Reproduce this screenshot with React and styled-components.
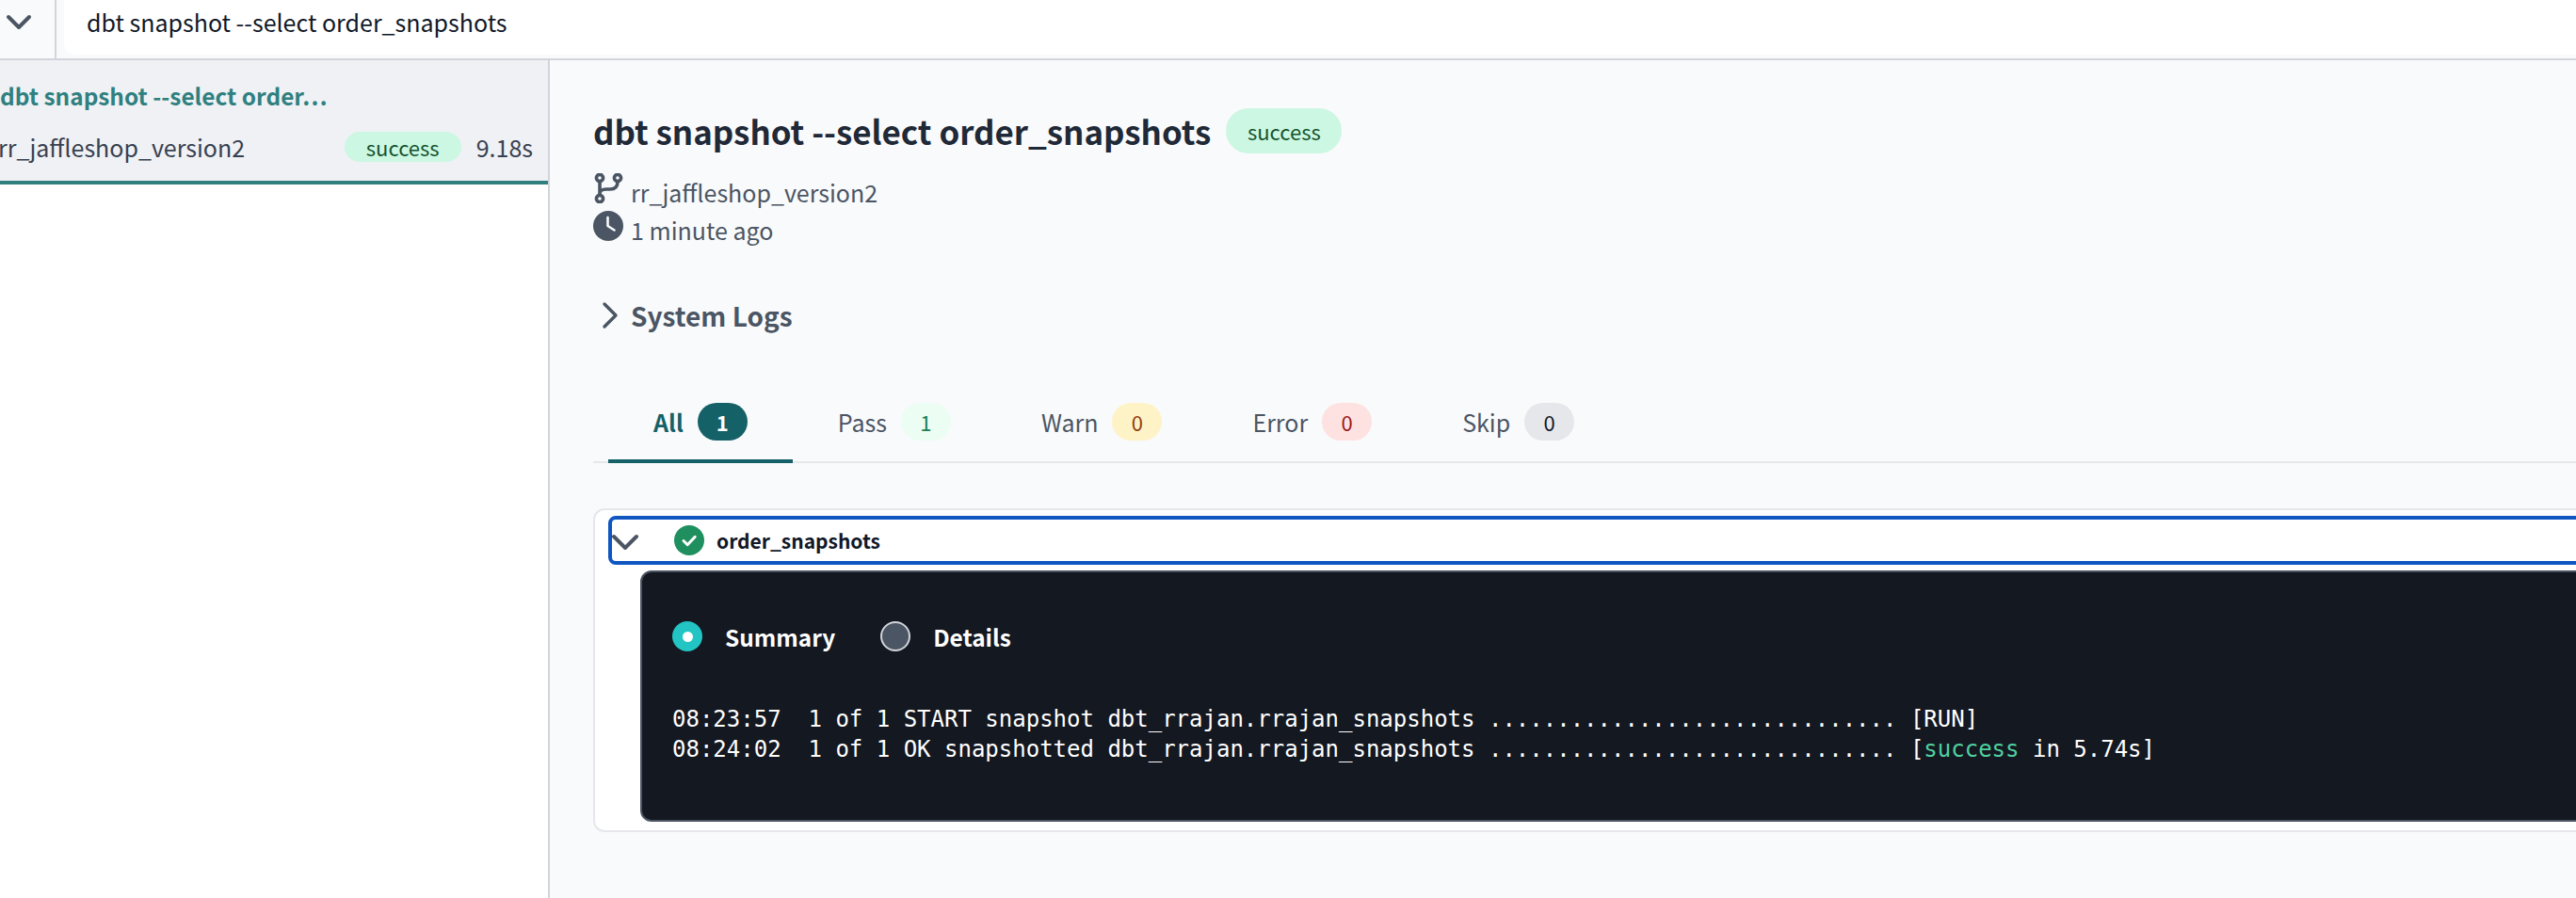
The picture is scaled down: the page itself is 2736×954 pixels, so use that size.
import React from 'react';
import styled, { createGlobalStyle } from 'styled-components';

const sans = `"Noto Sans CJK SC", "Source Sans Pro", "Noto Sans", sans-serif`;

const Global = createGlobalStyle`
    html, body {
        margin: 0;
        padding: 0;
        background: #f9fafb;
        overflow: hidden;
    }
    * {
        box-sizing: border-box;
    }
`;

const Page = styled.div`
    width: 2736px;
    height: 954px;
    display: flex;
    flex-direction: column;
    overflow: hidden;
    font-family: ${sans};
    color: #1f2937;
`;

const TopBar = styled.div`
    flex: none;
    height: 64px;
    display: flex;
    background: #f9fafb;
    border-bottom: 2px solid #d1d5db;
`;

const ToggleCell = styled.div`
    flex: none;
    width: 60px;
    padding: 14px 0 0 6px;
    border-right: 2px solid #d1d5db;
`;

const CommandBox = styled.div`
    flex: 1;
    height: 58px;
    margin-left: 8px;
    padding-left: 24px;
    display: flex;
    align-items: center;
    padding-bottom: 12px;
    background: #fff;
    border-bottom-left-radius: 12px;
    font-size: 25px;
    color: #111827;
`;

const Body = styled.div`
    flex: 1;
    display: flex;
    min-height: 0;
`;

const Sidebar = styled.div`
    flex: none;
    width: 584px;
    background: #fff;
    border-right: 2px solid #d1d5db;
`;

const RunItem = styled.div`
    height: 132px;
    padding: 18px 16px 0 0;
    background: #f0f1f4;
    border-bottom: 4px solid #2f7f7f;
`;

const RunTitle = styled.div`
    font-size: 24.4px;
    font-weight: 700;
    line-height: 40px;
    color: #2f8080;
`;

const RunMeta = styled.div`
    display: flex;
    align-items: center;
    margin-top: 16px;
    font-size: 25px;
    color: #374151;
`;

const RunBranch = styled.span`
    flex: 1;
    margin-left: -2px;
`;

const RunBadge = styled.span`
    width: 124px;
    height: 32px;
    display: flex;
    align-items: center;
    justify-content: center;
    border-radius: 16px;
    background: #ccf7e3;
    color: #14532d;
    font-size: 22px;
`;

const RunTime = styled.span`
    margin-left: 16px;
`;

const Main = styled.div`
    flex: 1;
    min-width: 0;
    padding: 51px 0 0 46px;
    background: #f9fafb;
`;

const Content = styled.div`
    width: 2400px;
`;

const TitleRow = styled.div`
    display: flex;
    align-items: center;
    height: 48px;
`;

const Title = styled.h1`
    margin: 0;
    font-size: 34.9px;
    font-weight: 700;
    color: #1f2937;
`;

const TitleBadge = styled.span`
    width: 123px;
    height: 48px;
    margin-left: 16px;
    display: flex;
    align-items: center;
    justify-content: center;
    border-radius: 24px;
    background: #ccf7e3;
    color: #14532d;
    font-size: 22px;
`;

const MetaList = styled.div`
    margin-top: 20px;
`;

const MetaRow = styled.div`
    display: flex;
    align-items: flex-start;
    gap: 8px;
    height: 40px;
    font-size: 25px;
    line-height: 42px;
    color: #4b5563;
`;

const MetaIcon = styled.svg`
    flex: none;
    width: 32px;
    height: 32px;
    margin-top: 1px;
`;

const LogsToggle = styled.div`
    display: flex;
    align-items: center;
    gap: 8px;
    height: 40px;
    margin-top: 52px;
    font-size: 28px;
    font-weight: 600;
    color: #4b5563;
`;

const Tabs = styled.div`
    display: flex;
    height: 92px;
    margin-top: 45px;
    padding-left: 16px;
    border-bottom: 2px solid #e5e7eb;
`;

const Tab = styled.div`
    height: 92px;
    padding: 28px 48px 0;
    display: flex;
    align-items: flex-start;
    gap: 15px;
    font-size: 25px;
    line-height: 40px;
    font-weight: ${(props) => (props.$active ? 600 : 400)};
    color: ${(props) => (props.$active ? '#156168' : '#4b5563')};
    border-bottom: ${(props) => (props.$active ? '4px solid #156168' : '0')};
`;

const Count = styled.span`
    width: 53px;
    height: 40px;
    display: flex;
    align-items: center;
    justify-content: center;
    border-radius: 20px;
    font-size: 22px;
    font-weight: ${(props) => (props.$active ? 700 : 400)};
    background: ${(props) => props.$bg};
    color: ${(props) => props.$fg};
`;

const Card = styled.div`
    margin-top: 48px;
    height: 344px;
    padding: 6px 0 0 14px;
    background: #fff;
    border: 2px solid #e5e7eb;
    border-radius: 12px;
`;

const NodeRow = styled.div`
    height: 52px;
    display: flex;
    align-items: center;
    border: 4px solid #0f56c0;
    border-radius: 8px;
`;

const NodeChevron = styled.svg`
    flex: none;
    width: 36px;
    height: 24px;
    margin-right: 30px;
`;

const NodeName = styled.span`
    margin-left: 13px;
    font-size: 21px;
    font-weight: 600;
    color: #111827;
`;

const Terminal = styled.div`
    height: 267px;
    margin: 6px 0 0 34px;
    padding: 52px 32px 0;
    background: #141821;
    border: 2px solid #4b5563;
    border-radius: 12px;
    color: #fff;
`;

const RadioRow = styled.div`
    display: flex;
    align-items: center;
    height: 32px;
`;

const Radio = styled.span`
    flex: none;
    width: 32px;
    height: 32px;
    border-radius: 50%;
    display: flex;
    align-items: center;
    justify-content: center;
    background: ${(props) => (props.$on ? '#22c4c4' : '#4b5563')};
    border: ${(props) => (props.$on ? '0' : '2px solid #d1d5db')};
    &::after {
        content: '';
        display: ${(props) => (props.$on ? 'block' : 'none')};
        width: 11px;
        height: 11px;
        border-radius: 50%;
        background: #fff;
    }
`;

const RadioLabel = styled.span`
    margin-left: 24px;
    margin-right: 48px;
    font-size: 24.4px;
    font-weight: 600;
`;

const LogOutput = styled.pre`
    margin: 56px 0 0;
    font-family: "DejaVu Sans Mono", "Liberation Mono", monospace;
    font-size: 24px;
    line-height: 32px;
    color: #fff;
`;

const Ok = styled.span`
    color: #4fd1a0;
`;

const ChevronDown = () => (
    <svg width="28" height="18" viewBox="0 0 28 18" fill="none">
        <path d="M3 3 L14 14 L25 3" stroke="#4b5563" strokeWidth="4" strokeLinecap="round" strokeLinejoin="round" />
    </svg>
);

const ChevronRight = () => (
    <svg width="32" height="32" viewBox="0 0 32 32" fill="none">
        <path d="M12 4 L24 16 L12 28" stroke="#4b5563" strokeWidth="3.4" strokeLinecap="round" strokeLinejoin="round" />
    </svg>
);

const BranchIcon = () => (
    <MetaIcon viewBox="0 0 32 32" fill="none" stroke="#4b5563" strokeWidth="3.6">
        <circle cx="7" cy="5" r="3.6" />
        <circle cx="7" cy="27" r="3.6" />
        <circle cx="26" cy="5" r="3.6" />
        <path d="M7 9v14M26 9c0 6-3 8-8 8h-4c-4 0-7 1-7 5" />
    </MetaIcon>
);

const ClockIcon = () => (
    <MetaIcon viewBox="0 0 32 32">
        <circle cx="16" cy="16" r="16" fill="#4b5563" />
        <path d="M15.5 7v9l7 4.5" fill="none" stroke="#f9fafb" strokeWidth="2.6" strokeLinecap="round" strokeLinejoin="round" />
    </MetaIcon>
);

const CheckIcon = () => (
    <svg width="32" height="32" viewBox="0 0 32 32">
        <circle cx="16" cy="16" r="16" fill="#1f8f60" />
        <path d="M10 16.5l4.2 4.2 8-8.4" fill="none" stroke="#fff" strokeWidth="3" strokeLinecap="round" strokeLinejoin="round" />
    </svg>
);

const tabs = [
    { label: 'All', count: 1, bg: '#156168', fg: '#fff', active: true },
    { label: 'Pass', count: 1, bg: '#ecfdf3', fg: '#1a7f56' },
    { label: 'Warn', count: 0, bg: '#fef3c7', fg: '#92400e' },
    { label: 'Error', count: 0, bg: '#fee2e2', fg: '#991b1b' },
    { label: 'Skip', count: 0, bg: '#e5e7eb', fg: '#111827' },
];

const logs = [
    '08:23:57  1 of 1 START snapshot dbt_rrajan.rrajan_snapshots .............................. [RUN]',
    '08:24:02  1 of 1 OK snapshotted dbt_rrajan.rrajan_snapshots .............................. [',
];

const App = () => (
    <Page>
        <Global />
        <TopBar>
            <ToggleCell>
                <ChevronDown />
            </ToggleCell>
            <CommandBox>dbt snapshot --select order_snapshots</CommandBox>
        </TopBar>
        <Body>
            <Sidebar>
                <RunItem>
                    <RunTitle>dbt snapshot --select order…</RunTitle>
                    <RunMeta>
                        <RunBranch>rr_jaffleshop_version2</RunBranch>
                        <RunBadge>success</RunBadge>
                        <RunTime>9.18s</RunTime>
                    </RunMeta>
                </RunItem>
            </Sidebar>
            <Main>
                <Content>
                    <TitleRow>
                        <Title>dbt snapshot --select order_snapshots</Title>
                        <TitleBadge>success</TitleBadge>
                    </TitleRow>
                    <MetaList>
                        <MetaRow>
                            <BranchIcon />
                            rr_jaffleshop_version2
                        </MetaRow>
                        <MetaRow>
                            <ClockIcon />1 minute ago
                        </MetaRow>
                    </MetaList>
                    <LogsToggle>
                        <ChevronRight />
                        System Logs
                    </LogsToggle>
                    <Tabs>
                        {tabs.map((tab) => (
                            <Tab key={tab.label} $active={tab.active}>
                                {tab.label}
                                <Count $active={tab.active} $bg={tab.bg} $fg={tab.fg}>
                                    {tab.count}
                                </Count>
                            </Tab>
                        ))}
                    </Tabs>
                    <Card>
                        <NodeRow>
                            <NodeChevron viewBox="0 0 36 24" fill="none">
                                <path d="M2 8 L14 20 L26 8" stroke="#4b5563" strokeWidth="4" strokeLinecap="round" strokeLinejoin="round" />
                            </NodeChevron>
                            <CheckIcon />
                            <NodeName>order_snapshots</NodeName>
                        </NodeRow>
                        <Terminal>
                            <RadioRow>
                                <Radio $on />
                                <RadioLabel>Summary</RadioLabel>
                                <Radio />
                                <RadioLabel>Details</RadioLabel>
                            </RadioRow>
                            <LogOutput>
                                {logs[0]}
                                {'\n'}
                                {logs[1]}
                                <Ok>success</Ok> in 5.74s]
                            </LogOutput>
                        </Terminal>
                    </Card>
                </Content>
            </Main>
        </Body>
    </Page>
);

export default App;
